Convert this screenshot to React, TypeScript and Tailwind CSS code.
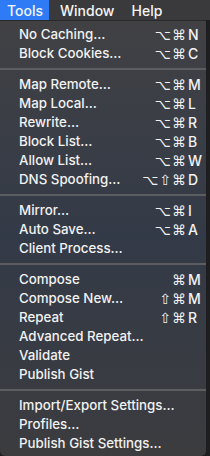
import React from "react";

type Item = { label: string; mods?: string; key?: string };

const groups: Item[][] = [
  [
    { label: "No Caching…", mods: "⌥⌘", key: "N" },
    { label: "Block Cookies…", mods: "⌥⌘", key: "C" },
  ],
  [
    { label: "Map Remote…", mods: "⌥⌘", key: "M" },
    { label: "Map Local…", mods: "⌥⌘", key: "L" },
    { label: "Rewrite…", mods: "⌥⌘", key: "R" },
    { label: "Block List…", mods: "⌥⌘", key: "B" },
    { label: "Allow List…", mods: "⌥⌘", key: "W" },
    { label: "DNS Spoofing…", mods: "⌥⇧⌘", key: "D" },
  ],
  [
    { label: "Mirror…", mods: "⌥⌘", key: "I" },
    { label: "Auto Save…", mods: "⌥⌘", key: "A" },
    { label: "Client Process…" },
  ],
  [
    { label: "Compose", mods: "⌘", key: "M" },
    { label: "Compose New…", mods: "⇧⌘", key: "M" },
    { label: "Repeat", mods: "⇧⌘", key: "R" },
    { label: "Advanced Repeat…" },
    { label: "Validate" },
    { label: "Publish Gist" },
  ],
  [
    { label: "Import/Export Settings…" },
    { label: "Profiles…" },
    { label: "Publish Gist Settings…" },
  ],
];

function Row({ item }: { item: Item }) {
  return (
    <div className="flex items-center h-[19px] pl-[19px] pr-[3px] text-[13.3px] text-[#f2f2f2]">
      <span className="flex-1 whitespace-nowrap">{item.label}</span>
      {item.mods && (
        <span className="text-right tracking-[1px] font-['DejaVu_Sans',sans-serif] text-[14px] leading-none">{item.mods}</span>
      )}
      <span className="w-[15px] ml-[1px] text-[14px]">{item.key}</span>
    </div>
  );
}

export default function App() {
  return (
    <div className="w-[210px] h-[456px] bg-[#1e1e20] overflow-hidden font-['Inter',sans-serif] font-medium">
      <div className="flex items-center h-[20px] bg-[#3a3a3c] text-[14px] text-[#f5f5f5]">
        <span className="h-full flex items-center px-[7px] w-[49px] bg-[#2f7bf5]">Tools</span>
        <span className="ml-[11px]">Window</span>
        <span className="ml-[17px]">Help</span>
      </div>
      <div className="w-[206px] h-[436px] pt-[4px] rounded-b-[5px] border-t border-[#2a2a2c] bg-gradient-to-b from-[#414144] via-[#333a47] to-[#3c3c3f]">
        {groups.map((g, i) => (
          <div key={i}>
            {i > 0 && (
              <div className="h-[12px] flex items-center">
                <div className="h-[2px] w-full bg-[#5c5d61]" />
              </div>
            )}
            {g.map((it) => (
              <Row key={it.label} item={it} />
            ))}
          </div>
        ))}
      </div>
    </div>
  );
}
